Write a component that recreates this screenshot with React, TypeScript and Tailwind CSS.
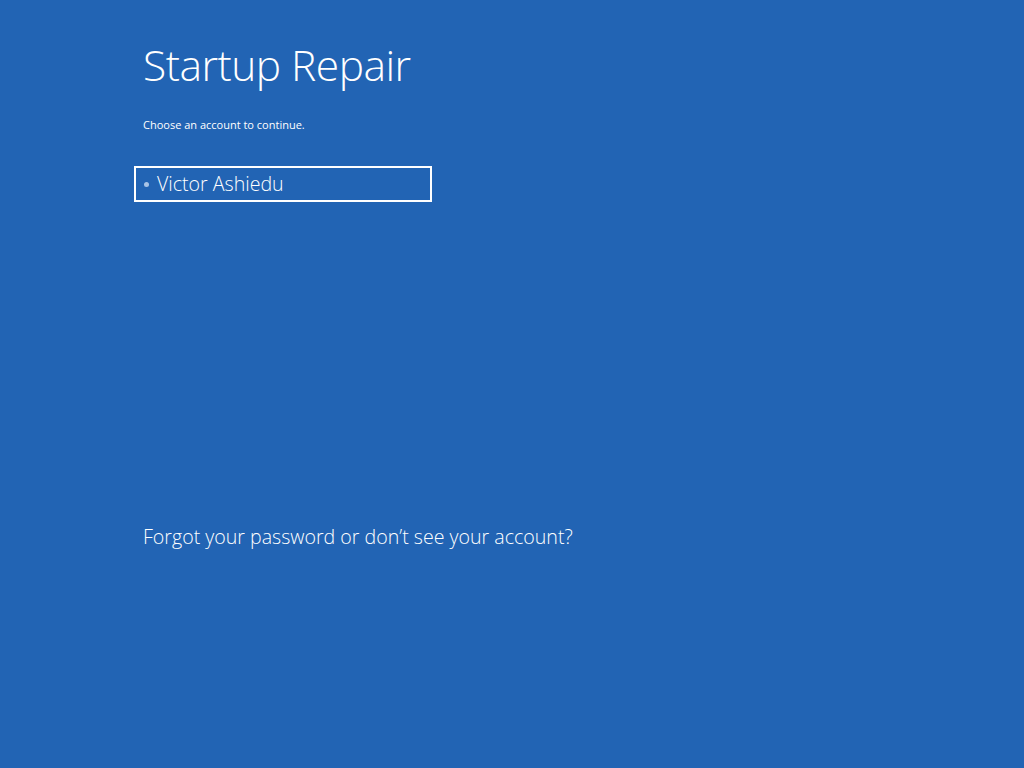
export default function App() {
  return (
    <div className="h-[768px] w-[1024px] overflow-hidden bg-[#2264b4] text-white" style={{ fontFamily: '"Open Sans", "Noto Sans", sans-serif' }}>
      <div className="flex h-full flex-col pl-[143px]">
        <h1 className="mt-[37px] text-[42.5px] font-light leading-[56px] tracking-[-0.5px]">Startup Repair</h1>
        <p className="mt-[25px] text-[11px] leading-[14px]">Choose an account to continue.</p>
        <div className="mt-[34px] -ml-[9px] flex h-[36px] w-[298px] items-center border-2 border-white pl-[8px]">
          <span className="h-[5px] w-[5px] rounded-full bg-[#a9c4e6]" />
          <span className="ml-[8px] text-[19.6px] font-light leading-none">Victor Ashiedu</span>
        </div>
        <p className="mt-[323px] text-[19.6px] font-light leading-[24px]">Forgot your password or don’t see your account?</p>
      </div>
    </div>
  );
}
